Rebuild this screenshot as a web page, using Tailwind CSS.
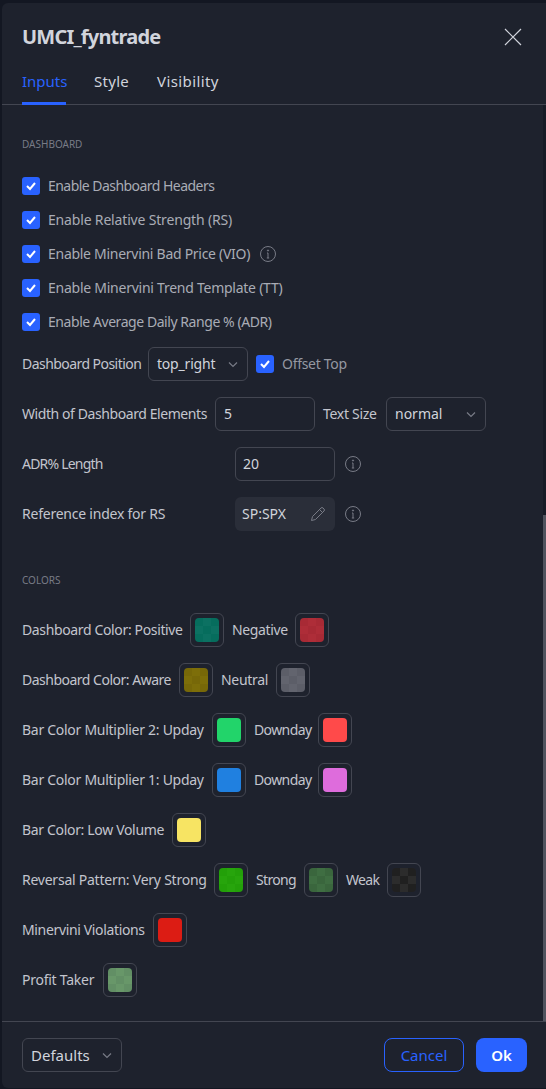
<!DOCTYPE html>
<html lang="en">
<head>
<meta charset="utf-8">
<script src="https://cdn.jsdelivr.net/npm/@tailwindcss/browser@4"></script>
</head>
<body class="bg-[#131722] font-['Noto_Sans',sans-serif]">
<div class="w-[546px] h-[1089px] pt-[3px] pl-[2px] pb-px overflow-hidden whitespace-nowrap">
<div class="h-full bg-[#1e222d] rounded-l-[6px] flex flex-col text-[14px] leading-[20px] text-[#c3c5cd]">
  <div class="h-[68px] shrink-0 flex items-center justify-between pl-[20px] pr-[24px]">
    <span class="text-[20px] font-bold tracking-[-0.8px] text-[#d1d4dc]">UMCI_fyntrade</span>
    <svg class="w-[18px] h-[18px]" viewBox="0 0 18 18" fill="none" stroke="#d1d4dc" stroke-width="1.2"><path d="M1 1l16 16M17 1L1 17"/></svg>
  </div>
  <div class="h-[34px] shrink-0 flex pl-[20px] border-b border-[#434651] text-[15px] text-[#d1d4dc]">
    <span class="relative w-[44px] mr-[28px] text-[#2962ff]">Inputs<span class="absolute left-0 right-0 bottom-[-1px] h-[3px] bg-[#2962ff]"></span></span>
    <span class="w-[35px] mr-[28px] tracking-[0.3px]">Style</span>
    <span class="tracking-[0.4px]">Visibility</span>
  </div>
  <div class="flex-1 relative pl-[20px] pt-[31px]">
    <div class="absolute right-0 top-0 bottom-0 w-[3px] bg-[#171b26]"><div class="absolute left-0 right-0 top-[410px] bottom-0 bg-[#50535e]"></div></div>
    <div class="h-[16px] flex items-center text-[10px] text-[#787b86]">DASHBOARD</div>
    <div class="h-[17px]"></div>
    <div class="h-[34px] flex items-center gap-[8px] text-[#a9acb5]"><span class="w-[18px] h-[18px] rounded-[3px] bg-[#2962ff] flex items-center justify-center"><svg class="w-[12px] h-[12px]" viewBox="0 0 12 12" fill="none" stroke="#fff" stroke-width="2"><path d="M2 6l3 3 5-6"/></svg></span><span class="tracking-[-0.54px]">Enable Dashboard Headers</span></div>
    <div class="h-[34px] flex items-center gap-[8px] text-[#a9acb5]"><span class="w-[18px] h-[18px] rounded-[3px] bg-[#2962ff] flex items-center justify-center"><svg class="w-[12px] h-[12px]" viewBox="0 0 12 12" fill="none" stroke="#fff" stroke-width="2"><path d="M2 6l3 3 5-6"/></svg></span><span class="tracking-[-0.17px]">Enable Relative Strength (RS)</span></div>
    <div class="h-[34px] flex items-center gap-[8px] text-[#a9acb5]"><span class="w-[18px] h-[18px] rounded-[3px] bg-[#2962ff] flex items-center justify-center"><svg class="w-[12px] h-[12px]" viewBox="0 0 12 12" fill="none" stroke="#fff" stroke-width="2"><path d="M2 6l3 3 5-6"/></svg></span><span class="tracking-[-0.28px]">Enable Minervini Bad Price (VIO)</span><svg class="w-[18px] h-[18px] ml-px" viewBox="0 0 18 18" fill="none" stroke="#787b86"><circle cx="9" cy="9" r="7.5"/><path d="M9 8v5M7.8 13h2.4M8 8h1"/><circle cx="9" cy="5.5" r=".6" fill="#787b86"/></svg></div>
    <div class="h-[34px] flex items-center gap-[8px] text-[#a9acb5]"><span class="w-[18px] h-[18px] rounded-[3px] bg-[#2962ff] flex items-center justify-center"><svg class="w-[12px] h-[12px]" viewBox="0 0 12 12" fill="none" stroke="#fff" stroke-width="2"><path d="M2 6l3 3 5-6"/></svg></span><span class="tracking-[-0.25px]">Enable Minervini Trend Template (TT)</span></div>
    <div class="h-[34px] flex items-center gap-[8px] text-[#a9acb5]"><span class="w-[18px] h-[18px] rounded-[3px] bg-[#2962ff] flex items-center justify-center"><svg class="w-[12px] h-[12px]" viewBox="0 0 12 12" fill="none" stroke="#fff" stroke-width="2"><path d="M2 6l3 3 5-6"/></svg></span><span class="tracking-[-0.44px]">Enable Average Daily Range % (ADR)</span></div>
    <div class="h-[50px] flex items-center">
      <span class="w-[126px] tracking-[-0.55px]">Dashboard Position</span>
      <div class="w-[100px] h-[34px] border border-[#434651] rounded-[6px] flex items-center justify-between pl-[8px] pr-[8px] text-[#d1d4dc] tracking-[-0.2px]">top_right<svg class="w-[12px] h-[12px]" viewBox="0 0 12 12" fill="none" stroke="#787b86" stroke-width="1.2"><path d="M2 4.5l4 4 4-4"/></svg></div>
      <span class="w-[18px] h-[18px] ml-[8px] mr-[8px] rounded-[3px] bg-[#2962ff] flex items-center justify-center"><svg class="w-[12px] h-[12px]" viewBox="0 0 12 12" fill="none" stroke="#fff" stroke-width="2"><path d="M2 6l3 3 5-6"/></svg></span>
      <span class="tracking-[-0.3px] text-[#9598a1]">Offset Top</span>
    </div>
    <div class="h-[50px] flex items-center">
      <span class="w-[193px] tracking-[-0.42px]">Width of Dashboard Elements</span>
      <div class="w-[100px] h-[34px] border border-[#434651] rounded-[6px] flex items-center pl-[8px] text-[#d1d4dc]">5</div>
      <span class="w-[71px] pl-[8px] tracking-[-0.3px]">Text Size</span>
      <div class="w-[100px] h-[34px] border border-[#434651] rounded-[6px] flex items-center justify-between pl-[8px] pr-[8px] text-[#d1d4dc]">normal<svg class="w-[12px] h-[12px]" viewBox="0 0 12 12" fill="none" stroke="#787b86" stroke-width="1.2"><path d="M2 4.5l4 4 4-4"/></svg></div>
    </div>
    <div class="h-[50px] flex items-center">
      <span class="w-[213px] tracking-[-0.8px]">ADR% Length</span>
      <div class="w-[100px] h-[34px] border border-[#434651] rounded-[6px] flex items-center pl-[7px] text-[#d1d4dc]">20</div>
      <svg class="w-[18px] h-[18px] ml-[9px]" viewBox="0 0 18 18" fill="none" stroke="#787b86"><circle cx="9" cy="9" r="7.5"/><path d="M9 8v5M7.8 13h2.4M8 8h1"/><circle cx="9" cy="5.5" r=".6" fill="#787b86"/></svg>
    </div>
    <div class="h-[50px] flex items-center">
      <span class="w-[213px] tracking-[-0.23px]">Reference index for RS</span>
      <div class="w-[100px] h-[34px] bg-[#2a2e39] rounded-[6px] flex items-center justify-between pl-[7px] pr-[9px] text-[#d1d4dc]">SP:SPX<svg class="w-[16px] h-[16px]" viewBox="0 0 16 16" fill="none" stroke="#787b86"><path d="M1.500 14.500l1-4L11 2a1.400 1.400 0 0 1 2 0l1 1a1.400 1.400 0 0 1 0 2l-8.500 8.500zM9.500 3.500l3 3"/></svg></div>
      <svg class="w-[18px] h-[18px] ml-[9px]" viewBox="0 0 18 18" fill="none" stroke="#787b86"><circle cx="9" cy="9" r="7.5"/><path d="M9 8v5M7.8 13h2.4M8 8h1"/><circle cx="9" cy="5.5" r=".6" fill="#787b86"/></svg>
    </div>
    <div class="h-[33px]"></div>
    <div class="h-[16px] flex items-center text-[10px] text-[#787b86]">COLORS</div>
    <div class="h-[17px]"></div>
    <div class="h-[50px] flex items-center gap-[8px]"><span class="w-[160px] tracking-[-0.36px]">Dashboard Color: Positive</span>
      <span class="w-[34px] h-[34px] border border-[#434651] rounded-[6px] flex items-center justify-center"><span class="w-[24px] h-[24px] rounded-[4px] bg-[repeating-conic-gradient(#0c7162_0_25%,#066d5d_0_50%)] bg-[length:16px_16px]"></span></span>
      <span class="w-[55px] tracking-[-0.35px]">Negative</span>
      <span class="w-[34px] h-[34px] border border-[#434651] rounded-[6px] flex items-center justify-center"><span class="w-[24px] h-[24px] rounded-[4px] bg-[repeating-conic-gradient(#ae2d38_0_25%,#a82a35_0_50%)] bg-[length:16px_16px]"></span></span>
    </div>
    <div class="h-[50px] flex items-center gap-[8px]"><span class="w-[149px] tracking-[-0.5px]">Dashboard Color: Aware</span>
      <span class="w-[34px] h-[34px] border border-[#434651] rounded-[6px] flex items-center justify-center"><span class="w-[24px] h-[24px] rounded-[4px] bg-[repeating-conic-gradient(#7d6e09_0_25%,#776808_0_50%)] bg-[length:16px_16px]"></span></span>
      <span class="w-[47px] tracking-[-0.3px]">Neutral</span>
      <span class="w-[34px] h-[34px] border border-[#434651] rounded-[6px] flex items-center justify-center"><span class="w-[24px] h-[24px] rounded-[4px] bg-[repeating-conic-gradient(#62646e_0_25%,#5c5e68_0_50%)] bg-[length:16px_16px]"></span></span>
    </div>
    <div class="h-[50px] flex items-center gap-[8px]"><span class="w-[182px] tracking-[-0.28px]">Bar Color Multiplier 2: Upday</span>
      <span class="w-[34px] h-[34px] border border-[#434651] rounded-[6px] flex items-center justify-center"><span class="w-[24px] h-[24px] rounded-[4px] bg-[#22d46a]"></span></span>
      <span class="w-[56px] tracking-[-0.6px]">Downday</span>
      <span class="w-[34px] h-[34px] border border-[#434651] rounded-[6px] flex items-center justify-center"><span class="w-[24px] h-[24px] rounded-[4px] bg-[#ff4a4a]"></span></span>
    </div>
    <div class="h-[50px] flex items-center gap-[8px]"><span class="w-[182px] tracking-[-0.28px]">Bar Color Multiplier 1: Upday</span>
      <span class="w-[34px] h-[34px] border border-[#434651] rounded-[6px] flex items-center justify-center"><span class="w-[24px] h-[24px] rounded-[4px] bg-[#2080e0]"></span></span>
      <span class="w-[56px] tracking-[-0.6px]">Downday</span>
      <span class="w-[34px] h-[34px] border border-[#434651] rounded-[6px] flex items-center justify-center"><span class="w-[24px] h-[24px] rounded-[4px] bg-[#de6cdc]"></span></span>
    </div>
    <div class="h-[50px] flex items-center gap-[8px]"><span class="w-[142px] tracking-[-0.33px]">Bar Color: Low Volume</span>
      <span class="w-[34px] h-[34px] border border-[#434651] rounded-[6px] flex items-center justify-center"><span class="w-[24px] h-[24px] rounded-[4px] bg-[#f7e463]"></span></span>
    </div>
    <div class="h-[50px] flex items-center gap-[8px]"><span class="w-[184px] tracking-[-0.24px]">Reversal Pattern: Very Strong</span>
      <span class="w-[34px] h-[34px] border border-[#434651] rounded-[6px] flex items-center justify-center"><span class="w-[24px] h-[24px] rounded-[4px] bg-[repeating-conic-gradient(#27a50c_0_25%,#23a009_0_50%)] bg-[length:16px_16px]"></span></span>
      <span class="w-[40px] tracking-[-0.66px]">Strong</span>
      <span class="w-[34px] h-[34px] border border-[#434651] rounded-[6px] flex items-center justify-center"><span class="w-[24px] h-[24px] rounded-[4px] bg-[repeating-conic-gradient(#3f6e42_0_25%,#3a663d_0_50%)] bg-[length:16px_16px]"></span></span>
      <span class="w-[33px] tracking-[-0.7px]">Weak</span>
      <span class="w-[34px] h-[34px] border border-[#434651] rounded-[6px] flex items-center justify-center"><span class="w-[24px] h-[24px] rounded-[4px] bg-[repeating-conic-gradient(#2c2c2c_0_25%,#202020_0_50%)] bg-[length:16px_16px]"></span></span>
    </div>
    <div class="h-[50px] flex items-center gap-[8px]"><span class="w-[123px] tracking-[-0.35px]">Minervini Violations</span>
      <span class="w-[34px] h-[34px] border border-[#434651] rounded-[6px] flex items-center justify-center"><span class="w-[24px] h-[24px] rounded-[4px] bg-[#dc1c14]"></span></span>
    </div>
    <div class="h-[50px] flex items-center gap-[8px]"><span class="w-[73px] tracking-[-0.25px]">Profit Taker</span>
      <span class="w-[34px] h-[34px] border border-[#434651] rounded-[6px] flex items-center justify-center"><span class="w-[24px] h-[24px] rounded-[4px] bg-[repeating-conic-gradient(#689769_0_25%,#628f65_0_50%)] bg-[length:16px_16px]"></span></span>
    </div>
  </div>
  <div class="h-[67px] shrink-0 border-t border-[#434651] flex items-center justify-between pl-[20px] pr-[19px]">
    <div class="w-[100px] h-[34px] border border-[#434651] rounded-[6px] flex items-center justify-between pl-[8px] pr-[8px] text-[15px] text-[#d1d4dc]">Defaults<svg class="w-[12px] h-[12px]" viewBox="0 0 12 12" fill="none" stroke="#787b86" stroke-width="1.2"><path d="M2 4.5l4 4 4-4"/></svg></div>
    <div class="flex gap-[12px]">
      <div class="w-[80px] h-[34px] border border-[#2962ff] rounded-[8px] flex items-center justify-center text-[15px] text-[#2962ff]">Cancel</div>
      <div class="w-[51px] h-[34px] bg-[#2962ff] rounded-[8px] flex items-center justify-center text-[15px] font-semibold text-white">Ok</div>
    </div>
  </div>
</div>
</div>
</body>
</html>
